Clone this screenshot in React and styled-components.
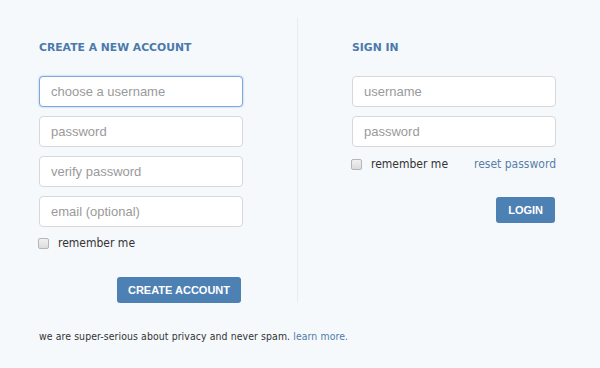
import styled, { createGlobalStyle } from 'styled-components'

const GlobalStyle = createGlobalStyle`
    html, body {
        margin: 0;
        padding: 0;
        background: #f6f9fc;
    }
    body {
        width: 600px;
        height: 368px;
        overflow: hidden;
        font-family: "DejaVu Sans", Verdana, sans-serif;
        color: #333;
    }
`

const Page = styled.div`
    padding: 18px 0 0 39px;
`

const Panels = styled.div`
    display: flex;
    align-items: stretch;
`

const Column = styled.form`
    width: 204px;
    padding-top: 23px;
    display: flex;
    flex-direction: column;
`

const Divider = styled.div`
    width: 1px;
    background: #e9ecef;
    margin: 0 54px 0 54px;
`

const Heading = styled.h2`
    margin: 0 0 22px;
    font-family: "DejaVu Sans", Verdana, sans-serif;
    font-size: 10.8px;
    line-height: 13px;
    font-weight: bold;
    color: #4b79ad;
`

const Input = styled.input`
    box-sizing: border-box;
    width: 204px;
    height: 31px;
    margin-bottom: 9px;
    padding: 0 11px;
    border: 1px solid ${p => (p.$focused ? '#7ea8dc' : '#d6d8da')};
    border-radius: 4px;
    background: #fff;
    box-shadow: ${p => (p.$focused ? '0 0 2px rgba(90, 140, 210, 0.6)' : 'none')};
    font-family: "Liberation Sans", Arial, sans-serif;
    font-size: 13px;
    color: #555;
    outline: none;
    &::placeholder {
        color: #9a9a9a;
    }
`

const OptionRow = styled.div`
    display: flex;
    align-items: center;
    justify-content: space-between;
    margin-top: ${p => p.$top || 0}px;
    height: 16px;
`

const Remember = styled.label`
    display: flex;
    align-items: center;
    gap: 9px;
    font-family: "DejaVu Sans Condensed", "DejaVu Sans", Verdana, sans-serif;
    font-stretch: condensed;
    font-size: 12px;
    color: #333;
`

const Box = styled.span`
    box-sizing: border-box;
    width: 11px;
    height: 11px;
    border: 1px solid #b5b5b5;
    border-radius: 2px;
    background: linear-gradient(#f1f1f1, #dcdcdc);
    margin-left: -1px;
`

const TextLink = styled.a`
    font-family: "DejaVu Sans Condensed", "DejaVu Sans", Verdana, sans-serif;
    font-stretch: condensed;
    font-size: 12px;
    color: #5a7ea8;
    text-decoration: none;
`

const Actions = styled.div`
    display: flex;
    justify-content: flex-end;
    margin-top: ${p => p.$top}px;
    padding-right: ${p => p.$right}px;
`

const Button = styled.button`
    height: 26px;
    padding: 0 ${p => p.$pad}px;
    border: none;
    border-radius: 3px;
    background: #4d80b3;
    color: #fff;
    font-family: "Liberation Sans", Arial, sans-serif;
    font-size: 11px;
    font-weight: bold;
    cursor: pointer;
`

const Footer = styled.p`
    margin: 27px 0 0;
    font-family: "DejaVu Sans Condensed", "DejaVu Sans", Verdana, sans-serif;
    font-stretch: condensed;
    font-size: 10.4px;
    letter-spacing: 0.1px;
    color: #333;
`

const FooterLink = styled.a`
    color: #4f7aa9;
    text-decoration: none;
`

export default function App() {
    return (
        <>
            <GlobalStyle />
            <Page>
                <Panels>
                    <Column>
                        <Heading>CREATE A NEW ACCOUNT</Heading>
                        <Input $focused placeholder="choose a username" />
                        <Input type="password" placeholder="password" />
                        <Input type="password" placeholder="verify password" />
                        <Input placeholder="email (optional)" />
                        <OptionRow $top={-1}>
                            <Remember><Box />remember me</Remember>
                        </OptionRow>
                        <Actions $top={26} $right={2}>
                            <Button type="button" $pad={11}>CREATE ACCOUNT</Button>
                        </Actions>
                    </Column>
                    <Divider />
                    <Column>
                        <Heading>SIGN IN</Heading>
                        <Input placeholder="username" />
                        <Input type="password" placeholder="password" />
                        <OptionRow $top={0}>
                            <Remember><Box />remember me</Remember>
                            <TextLink href="#">reset password</TextLink>
                        </OptionRow>
                        <Actions $top={25} $right={1}>
                            <Button type="button" $pad={12}>LOGIN</Button>
                        </Actions>
                    </Column>
                </Panels>
                <Footer>
                    we are super-serious about privacy and never spam. <FooterLink href="#">learn more.</FooterLink>
                </Footer>
            </Page>
        </>
    )
}
